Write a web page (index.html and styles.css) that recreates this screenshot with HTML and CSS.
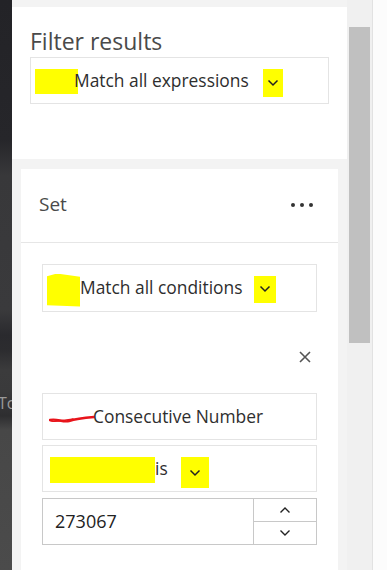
FILE: index.html
```html
<!DOCTYPE html>
<html>
<head>
<meta charset="utf-8">
<link rel="stylesheet" href="styles.css">
</head>
<body>
<div class="app">
  <div class="map"><span class="map-label">To</span></div>
  <div class="panel">
    <section class="card card-top">
      <h2 class="title">Filter results</h2>
      <div class="select select-top">
        <span class="mark mark-top"></span>
        <span class="select-text">Match all expressions</span>
        <span class="chev-mark chev-top">
          <svg width="12" height="8" viewBox="0 0 12 8"><path d="M1.5 1.5 L6 6 L10.5 1.5" fill="none" stroke="#222" stroke-width="1.5"/></svg>
        </span>
      </div>
    </section>
    <section class="card card-set">
      <header class="set-head">
        <span class="set-title">Set</span>
        <span class="dots"><i></i><i></i><i></i></span>
      </header>
      <div class="set-body">
        <div class="select select-cond">
          <span class="mark mark-cond"></span>
          <span class="select-text">Match all conditions</span>
          <span class="chev-mark chev-cond">
            <svg width="12" height="8" viewBox="0 0 12 8"><path d="M1.5 1.5 L6 6 L10.5 1.5" fill="none" stroke="#222" stroke-width="1.5"/></svg>
          </span>
        </div>
        <div class="close-row">
          <svg width="12" height="12" viewBox="0 0 12 12"><path d="M1 1 L11 11 M11 1 L1 11" fill="none" stroke="#555" stroke-width="1.6"/></svg>
        </div>
        <div class="field field-name">
          <svg class="squiggle" width="46" height="10" viewBox="0 0 46 10"><path d="M1 6 C8 4 14 9 20 7 C26 5 33 4 45 3" fill="none" stroke="#e8141b" stroke-width="2.4" stroke-linecap="round"/><path d="M2 7 C10 8 16 6 24 5" fill="none" stroke="#e8141b" stroke-width="1.6" stroke-linecap="round"/></svg>
          <span class="select-text">Consecutive Number</span>
        </div>
        <div class="field field-op">
          <span class="mark mark-op"></span>
          <span class="select-text">is</span>
          <span class="chev-mark chev-op">
            <svg width="12" height="8" viewBox="0 0 12 8"><path d="M1.5 1.5 L6 6 L10.5 1.5" fill="none" stroke="#222" stroke-width="1.5"/></svg>
          </span>
        </div>
        <div class="number">
          <span class="number-value">273067</span>
          <span class="spinner">
            <span class="spin">
              <svg width="12" height="8" viewBox="0 0 12 8"><path d="M1.5 6.5 L6 2 L10.5 6.5" fill="none" stroke="#222" stroke-width="1.4"/></svg>
            </span>
            <span class="spin spin-down">
              <svg width="12" height="8" viewBox="0 0 12 8"><path d="M1.5 1.5 L6 6 L10.5 1.5" fill="none" stroke="#222" stroke-width="1.4"/></svg>
            </span>
          </span>
        </div>
      </div>
    </section>
  </div>
  <div class="scrollbar"><div class="thumb"></div></div>
  <div class="edge"></div>
</div>
</body>
</html>
```

FILE: styles.css
```css
* { box-sizing: border-box; }
html, body { margin: 0; padding: 0; }
body {
  width: 387px;
  height: 570px;
  overflow: hidden;
  font-family: "Open Sans", "Noto Sans", sans-serif;
  color: #2e2e2e;
  background: #fcfcfc;
}
.app {
  display: flex;
  height: 570px;
}
.map {
  width: 12px;
  flex: none;
  overflow: hidden;
  background: linear-gradient(to bottom,
    #232327 0px, #26262a 140px, #38383a 175px, #3a3a3c 310px,
    #2a2a2e 335px, #2c2c2f 350px, #3b3b3c 370px, #3a3a3b 392px,
    #2e2e30 416px, #474747 430px, #4b4b4b 570px);
  padding-top: 393px;
  white-space: nowrap;
}
.map-label {
  display: block;
  font-size: 16px;
  line-height: 20px;
  color: #9a9a9a;
  margin-left: -2px;
}
.panel {
  width: 335px;
  flex: none;
  background: #f3f3f3;
  padding-top: 7px;
  display: flex;
  flex-direction: column;
  gap: 10px;
}
.card { background: #fff; }
.card-top {
  height: 152px;
  padding: 0 18px;
}
.title {
  margin: 0;
  padding-top: 19px;
  padding-bottom: 1px;
  font-weight: 400;
  font-size: 23px;
  line-height: 30px;
  color: #4a4a4a;
}
.select, .field, .number {
  display: flex;
  align-items: center;
  border: 1px solid #e4e4e4;
  height: 47px;
  font-size: 17.4px;
}
.select-text { white-space: nowrap; margin-top: -2px; }
.mark {
  display: block;
  background: #ffff00;
  flex: none;
}
.mark-top { width: 43px; height: 25px; margin-left: 4px; margin-right: -4px; margin-top: 2px; }
.chev-mark {
  display: flex;
  align-items: center;
  justify-content: center;
  background: #ffff00;
  flex: none;
}
.chev-top { width: 20px; height: 28px; margin-left: 14px; margin-top: 4px; }
.card-set {
  margin: 0 9px;
  flex: 1;
}
.set-head {
  height: 74px;
  border-bottom: 1px solid #e6e6e6;
  display: flex;
  align-items: center;
  justify-content: space-between;
  padding: 0 25px 0 18px;
}
.set-title {
  font-size: 19px;
  color: #4a4a4a;
  margin-top: -3px;
}
.dots { display: flex; gap: 5px; margin-top: -1px; }
.dots i {
  display: block;
  width: 4px;
  height: 4px;
  border-radius: 50%;
  background: #333;
}
.set-body { padding: 21px 21px 0; }
.select-cond { height: 48px; }
.mark-cond { width: 33px; height: 33px; margin-left: 4px; margin-right: 0; margin-top: 4px; clip-path: polygon(0 8%, 30% 0, 100% 10%, 100% 100%, 0 96%); }
.chev-cond { width: 22px; height: 27px; margin-left: 12px; margin-top: 2px; }
.close-row {
  height: 81px;
  display: flex;
  justify-content: flex-end;
  align-items: flex-start;
  padding: 39px 6px 0 0;
}
.squiggle { flex: none; margin-left: 6px; margin-right: -2px; margin-top: 4px; }
.field-op { margin-top: 5px; }
.mark-op { width: 105px; height: 26px; margin-left: 7px; margin-top: 2px; }
.chev-op { width: 28px; height: 31px; margin-left: 13px; margin-top: 8px; }
.number {
  margin-top: 6px;
  border-color: #c8c8c8;
  align-items: stretch;
}
.number-value {
  flex: 1;
  display: flex;
  align-items: center;
  padding-left: 12px;
  padding-bottom: 2px;
  font-size: 18px;
  color: #222;
}
.spinner {
  width: 63px;
  border-left: 1px solid #c8c8c8;
  display: flex;
  flex-direction: column;
}
.spin {
  flex: 1;
  display: flex;
  align-items: center;
  justify-content: center;
}
.spin-down { border-top: 1px solid #c8c8c8; }
.scrollbar {
  width: 25px;
  flex: none;
  background: #f0f0f0;
  padding: 27px 2px 0 2px;
}
.thumb {
  height: 316px;
  background: #c0c0c0;
}
.edge {
  flex: 1;
  border-left: 1px solid #e2e2e2;
  background: #fcfcfc;
}
```
